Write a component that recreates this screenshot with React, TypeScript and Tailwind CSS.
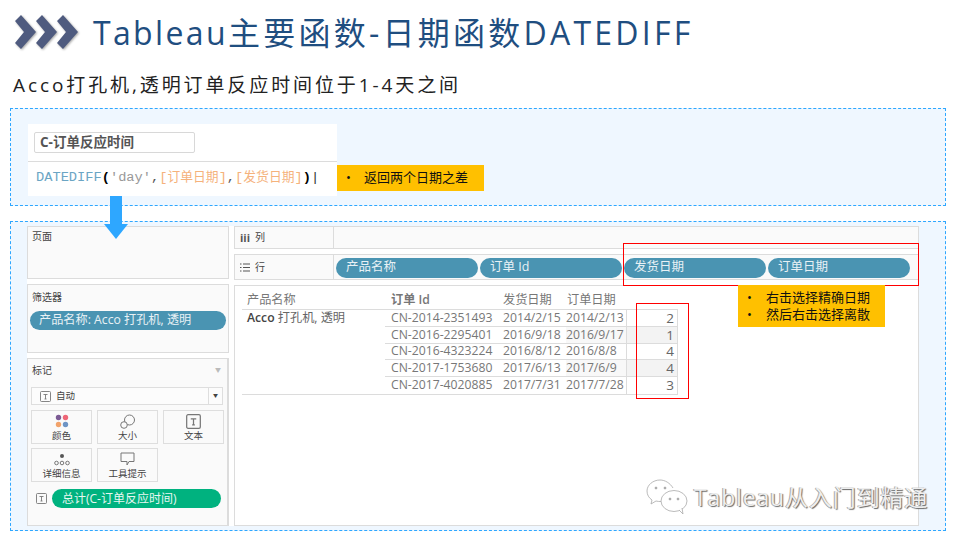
const cjk = { fontFamily: '"Open Sans","Noto Sans CJK SC",sans-serif' };

function Pill({ children, w }: { children: React.ReactNode; w: string }) {
  return (
    <div className={`flex h-[20px] items-center rounded-full bg-[#4a94b2] pl-[10px] text-[12.5px] text-[#e8f1f5] ${w}`}>
      {children}
    </div>
  );
}

function TIcon({ size = 11 }: { size?: number }) {
  return (
    <svg width={size} height={size} viewBox="0 0 11 11" fill="none" stroke="#777" strokeWidth="0.9">
      <rect x="0.5" y="0.5" width="10" height="10" rx="1" />
      <path d="M3.5 3.500h4M5.500 3.500v4.500M4.500 8h2" />
    </svg>
  );
}

function MarkBtn({ label, w, icon }: { label: string; w: string; icon: React.ReactNode }) {
  return (
    <div className={`flex h-[34px] flex-col items-center border border-[#dedede] pt-[1px] text-[9.5px] leading-[11px] text-[#444] ${w}`}>
      <div className="flex h-[18px] items-center">{icon}</div>
      <span>{label}</span>
    </div>
  );
}

const rows = [
  ['CN-2014-2351493', '2014/2/15', '2014/2/13', '2'],
  ['CN-2016-2295401', '2016/9/18', '2016/9/17', '1'],
  ['CN-2016-4323224', '2016/8/12', '2016/8/8', '4'],
  ['CN-2017-1753680', '2017/6/13', '2017/6/9', '4'],
  ['CN-2017-4020885', '2017/7/31', '2017/7/28', '3'],
];

function Chevrons() {
  return (
    <svg width="66" height="36" viewBox="0 0 66 36" className="drop-shadow-[1px_1px_1px_rgba(0,0,0,0.35)]">
      {[0, 21, 42].map((x) => (
        <polygon key={x} points={`${x},6 ${x + 6},0 ${x + 21},17 ${x + 6},34 ${x},28 ${x + 9},17`} fill="#4f5b7f" />
      ))}
    </svg>
  );
}

export default function App() {
  return (
    <div className="relative h-[540px] w-[960px] overflow-hidden bg-white" style={cjk}>
      <div className="flex h-[62px] items-start pl-[15px] pt-[15px]">
        <Chevrons />
        <h1 className="ml-[12px] mt-[-6px] text-[32px] leading-[48px] tracking-[3.25px] text-[#1f4e80]">
          <span className="tracking-[2.35px]">Tableau</span>主要函数-日期函数DATEDIFF
        </h1>
      </div>
      <p className="h-[46px] pl-[13px] pt-[8px] text-[19px] leading-[30px] tracking-[2.9px] text-[#222]">
        Acco打孔机,透明订单反应时间位于1-4天之间
      </p>

      <section className="ml-[10px] h-[98px] w-[936px] border border-dashed border-[#2ea7ff] bg-[#eff7ff] pl-[17px] pt-[15px]">
        <div className="flex items-end">
          <div className="h-[72px] w-[309px] bg-white">
            <div className="h-[38px] border-b border-[#dcdcdc] px-[6px] pt-[8px]">
              <div className="flex h-[21px] w-[161px] items-center rounded-[2px] border border-[#d8d8d8] pl-[5px] text-[13.5px] font-bold text-[#555]">
                C-订单反应时间
              </div>
            </div>
            <div className="flex h-[33px] items-center pl-[8px] text-[13.7px] text-[#555]" style={{ fontFamily: '"Liberation Mono","Noto Sans CJK SC",monospace' }}>
              <span className="text-[#6ba5c4]">DATEDIFF</span>
              <span className="font-bold text-black">(</span>
              <span className="text-[#999]">'day'</span>,
              <span className="text-[#f5b27c]">[<span className="text-[12.8px]">订单日期</span>]</span>,
              <span className="text-[#f5b27c]">[<span className="text-[12.8px]">发货日期</span>]</span>
              <span className="font-bold text-black">)</span>
              <span className="text-[#333]">|</span>
            </div>
          </div>
          <div className="mb-[5px] flex h-[26px] w-[147px] items-center bg-[#ffc000] pl-[9px] text-[13px] text-[#111]">
            <span className="w-[18px]">•</span>返回两个日期之差
          </div>
        </div>
      </section>

      <section className="ml-[10px] mt-[15px] h-[310px] w-[936px] border border-dashed border-[#2ea7ff] bg-[#eff7ff] pl-[16px] pt-[4px]">
        <div className="flex h-[300px] w-[892px] gap-[5px] bg-white">
          <aside className="flex w-[202px] flex-col gap-[5px] text-[10px] text-[#444]">
            <div className="h-[53px] border border-[#dcdcdc] bg-[#fafafa] pl-[4px] pt-[2px]">页面</div>
            <div className="h-[69px] border border-[#dcdcdc] bg-[#fafafa] pt-[5px]">
              <div className="pl-[4px]">筛选器</div>
              <div className="mx-[2px] mt-[6px] flex h-[19px] items-center rounded-full bg-[#4a94b2] pl-[9px] text-[12.2px] text-[#e8f1f5]">
                产品名称: Acco 打孔机, 透明
              </div>
            </div>
            <div className="flex-1 border border-r-2 border-[#dcdcdc] bg-[#fafafa] pt-[4px]">
              <div className="flex items-center justify-between pl-[4px] pr-[6px]">
                <span>标记</span>
                <span className="text-[6px] text-[#bbb]">▼</span>
              </div>
              <div className="ml-[3px] mt-[9px] flex h-[18px] w-[192px] items-center border border-[#dedede] bg-[#fcfcfc] pl-[8px]">
                <TIcon />
                <span className="ml-[5px] flex-1 text-[9.5px]">自动</span>
                <span className="flex h-full w-[14px] items-center justify-center border-l border-[#dedede] text-[5px]">▼</span>
              </div>
              <div className="ml-[3px] mt-[5px] grid w-[193px] grid-cols-[61px_61px_61px] gap-x-[5px] gap-y-[4px]">
                <MarkBtn
                  label="颜色"
                  w="w-[61px]"
                  icon={
                    <svg width="14" height="14" viewBox="0 0 14 14">
                      <circle cx="3.500" cy="3.500" r="2.700" fill="#7b5b94" />
                      <circle cx="10.500" cy="3.500" r="2.700" fill="#ee6677" />
                      <circle cx="3.500" cy="10.500" r="2.700" fill="#f2a36b" />
                      <circle cx="10.500" cy="10.500" r="2.700" fill="#6e94c4" />
                    </svg>
                  }
                />
                <MarkBtn
                  label="大小"
                  w="w-[61px]"
                  icon={
                    <svg width="16" height="15" viewBox="0 0 16 15" fill="none" stroke="#777">
                      <circle cx="9.500" cy="6" r="5" />
                      <circle cx="4" cy="11" r="3.300" fill="#fafafa" />
                    </svg>
                  }
                />
                <MarkBtn label="文本" w="w-[61px]" icon={<TIcon size={15} />} />
                <MarkBtn
                  label="详细信息"
                  w="w-[61px]"
                  icon={
                    <svg width="16" height="13" viewBox="0 0 16 13" fill="none" stroke="#777">
                      <circle cx="8" cy="3" r="2" fill="#555" stroke="none" />
                      <circle cx="2.500" cy="10" r="1.800" />
                      <circle cx="8" cy="10" r="1.800" />
                      <circle cx="13.500" cy="10" r="1.800" />
                    </svg>
                  }
                />
                <MarkBtn
                  label="工具提示"
                  w="w-[61px]"
                  icon={
                    <svg width="15" height="14" viewBox="0 0 15 14" fill="none" stroke="#777">
                      <path d="M1 1h13v8.500H9L7 13V9.500H1z" />
                    </svg>
                  }
                />
              </div>
              <div className="ml-[8px] mt-[7px] flex items-center gap-[5px]">
                <TIcon />
                <div className="flex h-[19px] w-[169px] items-center rounded-full bg-[#00b27f] pl-[10px] text-[12px] text-[#e6f7f1]">
                  总计(C-订单反应时间)
                </div>
              </div>
            </div>
          </aside>

          <main className="flex flex-1 flex-col gap-[5px] text-[10px] text-[#444]">
            <div className="flex h-[23px] border-y border-r border-[#dcdcdc] bg-[#fafafa]">
              <div className="flex w-[100px] items-center border-r border-l border-[#dcdcdc] pl-[5px]">
                <span className="mr-[5px] text-[11px] font-bold leading-none text-[#555]">iii</span>列
              </div>
            </div>
            <div className="flex h-[26px] items-center border-y border-r border-[#dcdcdc] bg-[#fafafa]">
              <div className="flex h-full w-[100px] items-center border-r border-l border-[#dcdcdc] pl-[5px]">
                <svg width="10" height="9" viewBox="0 0 10 9" stroke="#555" className="mr-[5px]">
                  <path d="M0 1h1.500M3 1h7M0 4.500h1.500M3 4.500h7M0 8h1.500M3 8h7" />
                </svg>
                行
              </div>
              <div className="ml-[2px] flex gap-[2px] pt-[1px]">
                <Pill w="w-[142px]">产品名称</Pill>
                <Pill w="w-[142px]">订单 Id</Pill>
                <Pill w="w-[142px]">发货日期</Pill>
                <Pill w="w-[142px]">订单日期</Pill>
              </div>
            </div>
            <div className="flex-1 border border-[#dcdcdc] bg-white pl-[7px] pt-[6px] text-[12.2px] text-[#777]">
              <div className="flex h-[18px] w-[436px] items-center border-b border-[#dcdcdc]">
                <span className="w-[149px] pl-[5px]">产品名称</span>
                <span className="w-[112px] font-semibold">订单 Id</span>
                <span className="w-[64px]">发货日期</span>
                <span>订单日期</span>
              </div>
              <div className="flex w-[436px] border-b border-[#dcdcdc]">
                <div className="mt-[-1px] w-[143px] pl-[5px] text-[#666]">
                  <span className="font-semibold text-[#444]">Acco</span> 打孔机, 透明
                </div>
                <div className="w-[293px]">
                  {rows.map((r, i) => (
                    <div key={r[0]} className="flex h-[16.8px] items-center border-b border-[#dcdcdc] last:border-b-0">
                      <span className="w-[118px] pl-[6px]">{r[0]}</span>
                      <span className="w-[63px]">{r[1]}</span>
                      <span className={`flex h-full w-[60px] items-center ${i % 2 ? 'bg-[#f8f8f8]' : ''}`}>{r[2]}</span>
                      <span className={`flex h-full w-[52px] items-center justify-end border-x border-[#dcdcdc] pr-[3px] text-[13.5px] text-[#666] ${i % 2 ? 'bg-[#f3f3f3]' : ''}`}>
                        {r[3]}
                      </span>
                    </div>
                  ))}
                </div>
              </div>
            </div>
          </main>
        </div>
      </section>

      {/* overlays */}
      <div className="absolute left-[108px] top-[196px] h-[46px] w-[16px]">
        <div className="mx-auto h-[28px] w-[12px] bg-[#2ea7ff]" />
        <div className="ml-[-4px] h-0 w-0 border-x-[12px] border-t-[15px] border-x-transparent border-t-[#2ea7ff]" />
      </div>
      <div className="absolute left-[623px] top-[243px] h-[43px] w-[296px] border border-[#f00]" />
      <div className="absolute left-[636px] top-[303px] h-[96px] w-[53px] border border-[#f00]" />
      <div className="absolute left-[738px] top-[285px] h-[42px] w-[147px] bg-[#ffc000] pl-[9px] pt-[4px] text-[13px] leading-[16.500px] text-[#111]">
        <div><span className="inline-block w-[19px]">•</span>右击选择精确日期</div>
        <div><span className="inline-block w-[19px]">•</span>然后右击选择离散</div>
      </div>
      <div className="absolute left-[646px] top-[479px] flex items-center">
        <svg width="42" height="36" viewBox="0 0 42 36" fill="none" stroke="#aaa" strokeWidth="0.8">
          <path d="M27 9C24 4 19 1 14 1 7 1 1 6 1 12c0 4 2 7 5 9l-1 4 5-3c2 .500 3 .500 5 .500" fill="#fff" />
          <ellipse cx="28" cy="22" rx="13" ry="10.500" fill="#fff" />
          <path d="M33 31l4 4-1-6" fill="#fff" />
          <circle cx="10" cy="9" r="1" fill="#999" />
          <circle cx="19" cy="9" r="1" fill="#999" />
          <circle cx="24" cy="20" r="1" fill="#999" />
          <circle cx="32" cy="20" r="1" fill="#999" />
        </svg>
        <span className="ml-[6px] text-[23px] tracking-[0.85px] text-[#eeeeee] [text-shadow:1px_1px_1px_#666,-1px_0_0_#aaa]">Tableau从入门到精通</span>
      </div>
    </div>
  );
}
